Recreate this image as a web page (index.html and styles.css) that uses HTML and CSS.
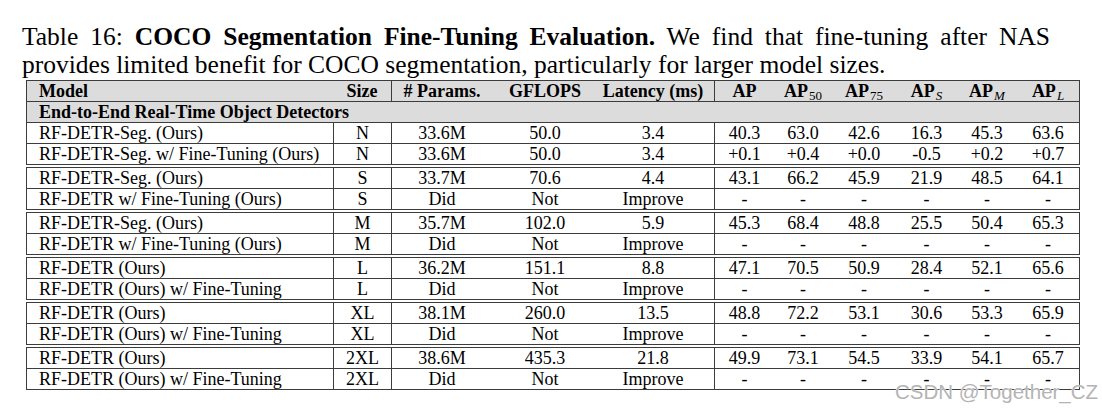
FILE: index.html
```html
<!DOCTYPE html>
<html>
<head>
<meta charset="utf-8">
<title>Table 16</title>
<link rel="stylesheet" href="styles.css">
</head>
<body>
<div class="page">
  <div class="caption">
    <div class="cap-line cap-first">Table 16: <b>COCO Segmentation Fine-Tuning Evaluation.</b> We find that fine-tuning after NAS</div>
    <div class="cap-line">provides limited benefit for COCO segmentation, particularly for larger model sizes.</div>
  </div>

  <div class="tables">
    <div class="box">
      <div class="row head">
        <div class="c model">Model</div>
        <div class="c size">Size</div>
        <div class="c params vl">#&nbsp;Params.</div>
        <div class="c">GFLOPS</div>
        <div class="c lat">Latency (ms)</div>
        <div class="c vl">AP</div>
        <div class="c">AP<span class="sub">50</span></div>
        <div class="c">AP<span class="sub">75</span></div>
        <div class="c">AP<span class="sub it">S</span></div>
        <div class="c">AP<span class="sub it">M</span></div>
        <div class="c">AP<span class="sub it">L</span></div>
      </div>
      <div class="row head section">
        <div class="c model span">End-to-End Real-Time Object Detectors</div>
      </div>
      <div class="row">
        <div class="c model">RF-DETR-Seg. (Ours)</div>
        <div class="c size vl">N</div>
        <div class="c vl">33.6M</div>
        <div class="c">50.0</div>
        <div class="c lat">3.4</div>
        <div class="c vl">40.3</div>
        <div class="c">63.0</div>
        <div class="c">42.6</div>
        <div class="c">16.3</div>
        <div class="c">45.3</div>
        <div class="c">63.6</div>
      </div>
      <div class="row">
        <div class="c model">RF-DETR-Seg. w/ Fine-Tuning (Ours)</div>
        <div class="c size vl">N</div>
        <div class="c vl">33.6M</div>
        <div class="c">50.0</div>
        <div class="c lat">3.4</div>
        <div class="c vl">+0.1</div>
        <div class="c">+0.4</div>
        <div class="c">+0.0</div>
        <div class="c">-0.5</div>
        <div class="c">+0.2</div>
        <div class="c">+0.7</div>
      </div>
    </div>

    <div class="box">
      <div class="row">
        <div class="c model">RF-DETR-Seg. (Ours)</div>
        <div class="c size vl">S</div>
        <div class="c vl">33.7M</div>
        <div class="c">70.6</div>
        <div class="c lat">4.4</div>
        <div class="c vl">43.1</div>
        <div class="c">66.2</div>
        <div class="c">45.9</div>
        <div class="c">21.9</div>
        <div class="c">48.5</div>
        <div class="c">64.1</div>
      </div>
      <div class="row">
        <div class="c model">RF-DETR w/ Fine-Tuning (Ours)</div>
        <div class="c size vl">S</div>
        <div class="c vl">Did</div>
        <div class="c">Not</div>
        <div class="c lat">Improve</div>
        <div class="c vl">-</div>
        <div class="c">-</div>
        <div class="c">-</div>
        <div class="c">-</div>
        <div class="c">-</div>
        <div class="c">-</div>
      </div>
    </div>

    <div class="box">
      <div class="row">
        <div class="c model">RF-DETR-Seg. (Ours)</div>
        <div class="c size vl">M</div>
        <div class="c vl">35.7M</div>
        <div class="c">102.0</div>
        <div class="c lat">5.9</div>
        <div class="c vl">45.3</div>
        <div class="c">68.4</div>
        <div class="c">48.8</div>
        <div class="c">25.5</div>
        <div class="c">50.4</div>
        <div class="c">65.3</div>
      </div>
      <div class="row">
        <div class="c model">RF-DETR w/ Fine-Tuning (Ours)</div>
        <div class="c size vl">M</div>
        <div class="c vl">Did</div>
        <div class="c">Not</div>
        <div class="c lat">Improve</div>
        <div class="c vl">-</div>
        <div class="c">-</div>
        <div class="c">-</div>
        <div class="c">-</div>
        <div class="c">-</div>
        <div class="c">-</div>
      </div>
    </div>

    <div class="box">
      <div class="row">
        <div class="c model">RF-DETR (Ours)</div>
        <div class="c size vl">L</div>
        <div class="c vl">36.2M</div>
        <div class="c">151.1</div>
        <div class="c lat">8.8</div>
        <div class="c vl">47.1</div>
        <div class="c">70.5</div>
        <div class="c">50.9</div>
        <div class="c">28.4</div>
        <div class="c">52.1</div>
        <div class="c">65.6</div>
      </div>
      <div class="row">
        <div class="c model">RF-DETR (Ours) w/ Fine-Tuning</div>
        <div class="c size vl">L</div>
        <div class="c vl">Did</div>
        <div class="c">Not</div>
        <div class="c lat">Improve</div>
        <div class="c vl">-</div>
        <div class="c">-</div>
        <div class="c">-</div>
        <div class="c">-</div>
        <div class="c">-</div>
        <div class="c">-</div>
      </div>
    </div>

    <div class="box">
      <div class="row">
        <div class="c model">RF-DETR (Ours)</div>
        <div class="c size vl">XL</div>
        <div class="c vl">38.1M</div>
        <div class="c">260.0</div>
        <div class="c lat">13.5</div>
        <div class="c vl">48.8</div>
        <div class="c">72.2</div>
        <div class="c">53.1</div>
        <div class="c">30.6</div>
        <div class="c">53.3</div>
        <div class="c">65.9</div>
      </div>
      <div class="row">
        <div class="c model">RF-DETR (Ours) w/ Fine-Tuning</div>
        <div class="c size vl">XL</div>
        <div class="c vl">Did</div>
        <div class="c">Not</div>
        <div class="c lat">Improve</div>
        <div class="c vl">-</div>
        <div class="c">-</div>
        <div class="c">-</div>
        <div class="c">-</div>
        <div class="c">-</div>
        <div class="c">-</div>
      </div>
    </div>

    <div class="box">
      <div class="row">
        <div class="c model">RF-DETR (Ours)</div>
        <div class="c size vl">2XL</div>
        <div class="c vl">38.6M</div>
        <div class="c">435.3</div>
        <div class="c lat">21.8</div>
        <div class="c vl">49.9</div>
        <div class="c">73.1</div>
        <div class="c">54.5</div>
        <div class="c">33.9</div>
        <div class="c">54.1</div>
        <div class="c">65.7</div>
      </div>
      <div class="row">
        <div class="c model">RF-DETR (Ours) w/ Fine-Tuning</div>
        <div class="c size vl">2XL</div>
        <div class="c vl">Did</div>
        <div class="c">Not</div>
        <div class="c lat">Improve</div>
        <div class="c vl">-</div>
        <div class="c">-</div>
        <div class="c">-</div>
        <div class="c">-</div>
        <div class="c">-</div>
        <div class="c">-</div>
      </div>
    </div>
  </div>

  <div class="watermark">CSDN @Together_CZ</div>
</div>
</body>
</html>
```

FILE: styles.css
```css
html, body {
  margin: 0;
  padding: 0;
  background: #ffffff;
}

.page {
  position: relative;
  width: 1102px;
  height: 412px;
  overflow: hidden;
  font-family: "Liberation Serif", "Times New Roman", serif;
  color: #000;
}

.caption {
  padding-top: 23px;
  margin-left: 22px;
  width: 1028px;
  font-size: 25.5px;
  line-height: 28px;
}

.cap-line {
  white-space: nowrap;
}

.cap-first {
  text-align: justify;
  text-align-last: justify;
  white-space: normal;
}

.cap-first b {
  font-weight: bold;
}

.tables {
  margin-left: 26px;
  width: 1054px;
  display: flex;
  flex-direction: column;
  gap: 2px;
  margin-top: 1px;
}

.box {
  border: 1px solid #3c3c3c;
}

.row {
  display: grid;
  grid-template-columns: 306px 58px 101px 106px 116px 60px 58px 64px 61px 60px 62px;
  height: 20px;
  font-size: 18px;
  line-height: 20px;
}

.row + .row {
  border-top: 1px solid #3c3c3c;
}

.head {
  background: #dcdcdc;
  font-weight: bold;
}

.c {
  box-sizing: border-box;
  text-align: center;
  white-space: nowrap;
  height: 20px;
}

.c.model {
  text-align: left;
  padding-left: 12px;
}

.c.span {
  grid-column: 1 / -1;
}

.c.lat {
  padding-right: 6px;
}

.c.vl {
  border-left: 1px solid #3c3c3c;
}

.sub {
  font-weight: normal;
  font-size: 13px;
  position: relative;
  top: 3px;
  margin-left: 1px;
}

.sub.it {
  font-style: italic;
}

.watermark {
  position: absolute;
  left: 895px;
  top: 381px;
  font-family: "Liberation Sans", Arial, sans-serif;
  font-size: 20.5px;
  line-height: 21px;
  color: #b4b4b4;
  text-shadow: 0 0 1px #ffffff, 0 0 1px #ffffff;
  white-space: nowrap;
}
```
